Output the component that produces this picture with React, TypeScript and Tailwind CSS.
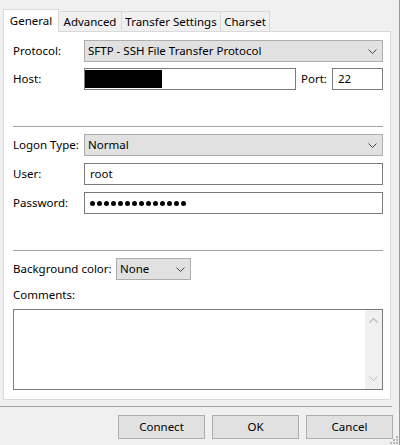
import type { ReactNode } from "react";

function Chevron({ color = "#444" }: { color?: string }) {
  return (
    <svg width="9" height="5" viewBox="0 0 9 5" fill="none">
      <path d="M0.5 0.5 L4.5 4.5 L8.5 0.5" stroke={color} strokeWidth="1" />
    </svg>
  );
}

function Select({ value, className = "" }: { value: string; className?: string }) {
  return (
    <div
      className={`flex h-[22px] items-center justify-between border border-[#adadad] bg-[#e1e1e1] pl-[3px] pr-[5px] ${className}`}
    >
      <span>{value}</span>
      <Chevron />
    </div>
  );
}

function Field({ children, className = "" }: { children?: ReactNode; className?: string }) {
  return (
    <div className={`flex h-[22px] items-center border border-[#7a7a7a] bg-white pl-[5px] ${className}`}>
      {children}
    </div>
  );
}

function Row({ label, labelWidth = "w-[71px]", children, className = "" }: { label: string; labelWidth?: string; children: ReactNode; className?: string }) {
  return (
    <div className={`flex h-[22px] items-center ${className}`}>
      <span className={`shrink-0 ${labelWidth}`}>{label}</span>
      {children}
    </div>
  );
}

function Tab({ label, active, width, first }: { label: string; active?: boolean; width: string; first?: boolean }) {
  if (active) {
    return (
      <div
        className={`relative z-10 mb-[-1px] flex h-[23px] items-center justify-center border-t border-r border-[#d9d9d9] bg-white ${first ? "border-l" : ""} ${width}`}
      >
        {label}
      </div>
    );
  }
  return (
    <div
      className={`flex h-[20px] items-center justify-center border-t border-r border-[#d9d9d9] bg-[#f0f0f0] ${first ? "border-l" : ""} ${width}`}
    >
      {label}
    </div>
  );
}

export default function App() {
  const dots = Array.from({ length: 14 });

  return (
    <div className="relative flex h-[445px] w-[400px] flex-col border-r border-[#9a9a9a] bg-[#f0f0f0] font-['Noto_Sans',sans-serif] text-[11.5px] text-black">
      {/* tabs */}
      <div className="flex h-[31px] items-end pl-[3px]">
        <Tab label="General" active first width="w-[56px]" />
        <Tab label="Advanced" width="w-[63px]" />
        <Tab label="Transfer Settings" width="w-[99px]" />
        <Tab label="Charset" width="w-[49px]" />
      </div>

      {/* panel */}
      <div className="ml-[3px] flex h-[369px] w-[388px] flex-col border border-[#d9d9d9] bg-white pt-[8px] pl-[9px] pr-[7px]">
        <Row label="Protocol:">
          <Select value="SFTP - SSH File Transfer Protocol" className="flex-1" />
        </Row>
        <Row label="Host:" className="mt-[6px]">
          <div className="flex h-[22px] w-[212px] items-start border border-[#7a7a7a] bg-white pt-px">
            <div className="h-[18px] w-[77px] bg-black" />
          </div>
          <span className="w-[36px] pl-[5px]">Port:</span>
          <Field className="flex-1">22</Field>
        </Row>

        <div className="mt-[36px] h-px bg-[#a0a0a0]" />

        <Row label="Logon Type:" className="mt-[7px]">
          <Select value="Normal" className="flex-1" />
        </Row>
        <Row label="User:" className="mt-[7px]">
          <Field className="flex-1">root</Field>
        </Row>
        <Row label="Password:" className="mt-[7px]">
          <Field className="flex-1 gap-[2px] pl-[5px]">
            {dots.map((_, i) => (
              <span key={i} className="h-[5px] w-[5px] rounded-full bg-black" />
            ))}
          </Field>
        </Row>

        <div className="mt-[36px] h-px bg-[#a0a0a0]" />

        <Row label="Background color:" labelWidth="w-[103px]" className="mt-[7px]">
          <Select value="None" className="w-[75px]" />
        </Row>
        <div className="mt-[7px] flex h-[16px] items-center">Comments:</div>
        <div className="mt-[6px] flex h-[81px] border border-[#7a7a7a] bg-white">
          <div className="flex-1" />
          <div className="flex w-[17px] flex-col items-center justify-between bg-[#f0f0f0] py-[8px]">
            <svg width="9" height="5" viewBox="0 0 9 5" fill="none">
              <path d="M0.5 4.5 L4.5 0.5 L8.5 4.5" stroke="#c0c0c0" strokeWidth="1.5" />
            </svg>
            <Chevron color="#c0c0c0" />
          </div>
        </div>
      </div>

      {/* footer */}
      <div className="mt-[6px] h-px w-[392px] bg-[#a0a0a0]" />
      <div className="mt-[8px] flex gap-[7px] pl-[118px]">
        {["Connect", "OK", "Cancel"].map((b) => (
          <button
            key={b}
            className="flex h-[24px] w-[87px] items-center justify-center border border-[#adadad] bg-[#e1e1e1]"
          >
            {b}
          </button>
        ))}
      </div>

      {/* resize grip */}
      <svg className="absolute right-[1px] bottom-[1px]" width="8" height="8" viewBox="0 0 8 8">
        <rect x="6" y="0" width="2" height="2" fill="#b8b8b8" />
        <rect x="3" y="3" width="2" height="2" fill="#b8b8b8" />
        <rect x="6" y="3" width="2" height="2" fill="#b8b8b8" />
        <rect x="0" y="6" width="2" height="2" fill="#b8b8b8" />
        <rect x="3" y="6" width="2" height="2" fill="#b8b8b8" />
        <rect x="6" y="6" width="2" height="2" fill="#b8b8b8" />
      </svg>
    </div>
  );
}
